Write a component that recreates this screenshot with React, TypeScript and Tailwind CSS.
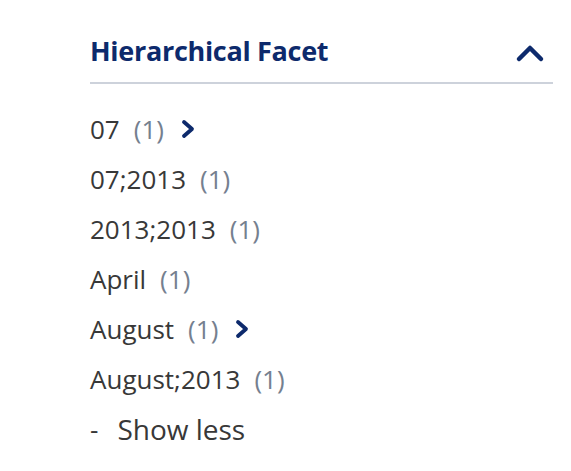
export default function App() {
  const items: { label: string; count: number; more?: boolean }[] = [
    { label: "07", count: 1, more: true },
    { label: "07;2013", count: 1 },
    { label: "2013;2013", count: 1 },
    { label: "April", count: 1 },
    { label: "August", count: 1, more: true },
    { label: "August;2013", count: 1 },
  ];

  return (
    <div className="min-h-screen bg-white pt-[33px] pl-[90px]" style={{ fontFamily: '"Open Sans", sans-serif' }}>
      <div className="w-[463px]">
        {/* Header */}
        <div className="flex items-center justify-between pb-[13px] border-b-2 border-[#cdd2db]">
          <h2 className="text-[27px] leading-[36px] font-bold tracking-[-0.3px] text-[#0d2a6c]">
            Hierarchical Facet
          </h2>
          <svg width="30" height="20" viewBox="0 0 30 20" fill="none" className="mr-[8px] mt-[4px] text-[#0d2a6c]" aria-hidden="true">
            <path d="M4 16L15 5l11 11" stroke="currentColor" strokeWidth="4.5" strokeLinecap="round" strokeLinejoin="round" />
          </svg>
        </div>

        {/* Values */}
        <ul className="mt-[20px] text-[26px] leading-[50px]">
          {items.map((it) => (
            <li key={it.label} className="flex items-center">
              <span className="text-[#383838]">{it.label}</span>
              <span className="ml-[14px] text-[#75808f]">({it.count})</span>
              {it.more && (
                <svg width="18" height="20" viewBox="0 0 18 20" fill="none" className="ml-[16px] text-[#0d2a6c]" aria-hidden="true">
                  <path d="M4 3l8 7-8 7" stroke="currentColor" strokeWidth="3.8" strokeLinecap="round" strokeLinejoin="round" />
                </svg>
              )}
            </li>
          ))}
          <li className="flex items-center text-[#383838]">
            <span>-</span>
            <span className="ml-[19px] text-[28px]">Show less</span>
          </li>
        </ul>
      </div>
    </div>
  );
}
